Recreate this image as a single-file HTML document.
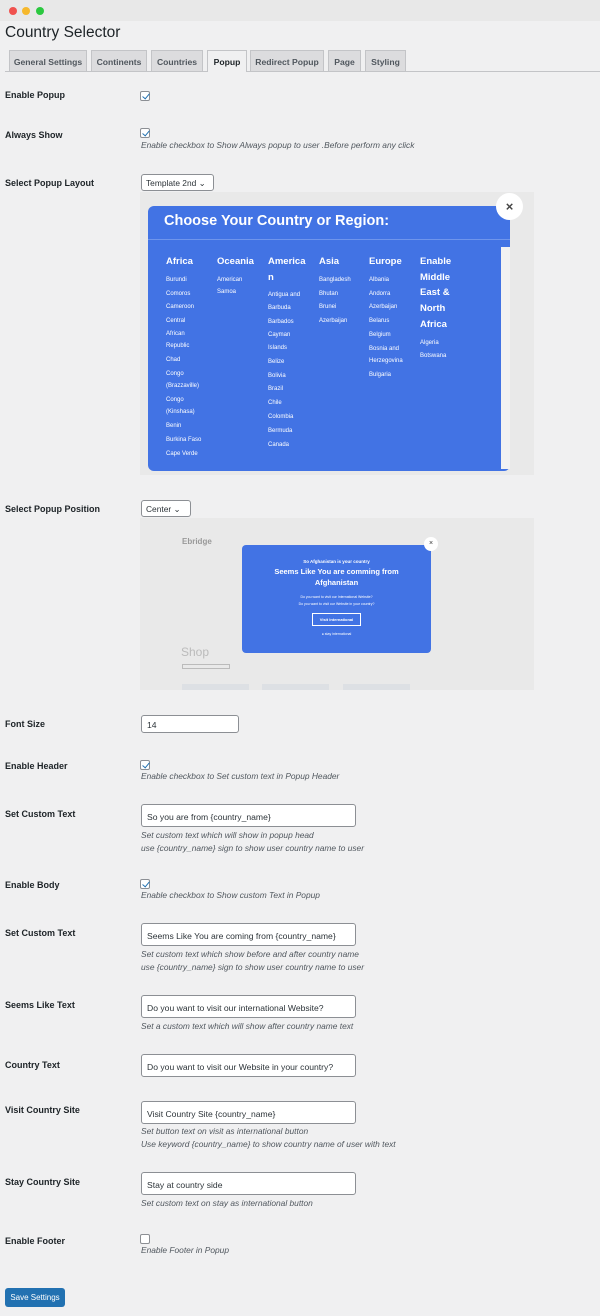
<!DOCTYPE html>
<html><head><meta charset="utf-8"><style>
*{margin:0;padding:0;box-sizing:border-box}
body{width:600px;height:1316px;background:#f0f0f1;font-family:"Liberation Sans",sans-serif;color:#1d2327;position:relative;overflow:hidden}
.a{position:absolute}
.lbl{position:absolute;left:5px;font-size:9px;font-weight:bold;color:#1d2327}
.cb{position:absolute;left:140px;width:10px;height:10px;border:1px solid #8c8f94;border-radius:2px;background:#fff}
.cb.on:after{content:"";position:absolute;left:3px;top:0px;width:3px;height:6px;border:solid #2271b1;border-width:0 1.5px 1.5px 0;transform:rotate(40deg)}
.desc{position:absolute;left:141px;font-size:8.4px;font-style:italic;color:#50575e;line-height:13px}
.inp{position:absolute;left:141px;width:215px;height:23px;background:#fff;border:1px solid #8c8f94;border-radius:3px;font-size:8.6px;padding:7px 0 0 5px;color:#2c3338}
.sel{position:absolute;left:141px;height:17px;background:#fff;border:1px solid #8c8f94;border-radius:3px;font-size:8.4px;padding:3px 0 0 4px;color:#2c3338}
.tab{position:absolute;top:50px;height:21px;background:#dcdcde;border:1px solid #c3c4c7;border-bottom:none;font-size:8.6px;font-weight:bold;color:#50575e;text-align:center;padding-top:6px}
.col{position:absolute;top:254px;color:#fff;width:48px}
.col h4{font-size:9.5px;line-height:15.7px;font-weight:bold;margin-bottom:4px}
.col p{font-size:6px;line-height:12.3px;margin-bottom:1.6px}
</style></head><body>
<div class="a" style="left:0;top:0;width:600px;height:21px;background:#e8e8e8"></div>
<div class="a" style="left:9px;top:7px;width:8px;height:8px;border-radius:50%;background:#f0524f"></div>
<div class="a" style="left:22px;top:7px;width:8px;height:8px;border-radius:50%;background:#f6b82c"></div>
<div class="a" style="left:36px;top:7px;width:8px;height:8px;border-radius:50%;background:#2bc840"></div>
<div class="a" style="left:5px;top:24px;font-size:15.5px;color:#1d2327">Country Selector</div>
<div class="a" style="left:5px;top:71px;width:595px;height:1px;background:#c3c4c7"></div>
<div class="tab" style="left:9px;width:78px">General Settings</div>
<div class="tab" style="left:91px;width:56px">Continents</div>
<div class="tab" style="left:151px;width:52px">Countries</div>
<div class="tab" style="left:207px;width:40px;height:22px;background:#f0f0f1;color:#1d2327">Popup</div>
<div class="tab" style="left:250px;width:74px">Redirect Popup</div>
<div class="tab" style="left:328px;width:33px">Page</div>
<div class="tab" style="left:365px;width:41px">Styling</div>

<div class="lbl" style="top:90px">Enable Popup</div><div class="cb on" style="top:91px"></div>
<div class="lbl" style="top:130px">Always Show</div><div class="cb on" style="top:128px"></div>
<div class="desc" style="top:139px">Enable checkbox to Show Always popup to user .Before perform any click</div>
<div class="lbl" style="top:178px">Select Popup Layout</div>
<div class="sel" style="top:174px;width:73px">Template 2nd &#8964;</div>

<div class="a" style="left:140px;top:192px;width:394px;height:283px;background:#e9e9e9"></div>
<div class="a" style="left:148px;top:206px;width:362px;height:265px;background:#4273e4;border-radius:6px"></div>
<div class="a" style="left:164px;top:213px;font-size:14.5px;font-weight:bold;color:#fff">Choose Your Country or Region:</div>
<div class="a" style="left:148px;top:239px;width:362px;height:1px;background:#6f95ec"></div>
<div class="a" style="left:501px;top:247px;width:9px;height:222px;background:#f2f2f2"></div>
<div class="a" style="left:496px;top:193px;width:27px;height:27px;border-radius:50%;background:#fff;font-size:13px;font-weight:bold;color:#444;text-align:center;line-height:27px">×</div>
<div class="col" style="left:166px"><h4>Africa</h4><p>Burundi</p><p>Comoros</p><p>Cameroon</p><p>Central<br>African<br>Republic</p><p>Chad</p><p>Congo<br>(Brazzaville)</p><p>Congo<br>(Kinshasa)</p><p>Benin</p><p>Burkina Faso</p><p>Cape Verde</p></div>
<div class="col" style="left:217px"><h4>Oceania</h4><p>American<br>Samoa</p></div>
<div class="col" style="left:268px"><h4>America<br>n</h4><p>Antigua and<br>Barbuda</p><p>Barbados</p><p>Cayman<br>Islands</p><p>Belize</p><p>Bolivia</p><p>Brazil</p><p>Chile</p><p>Colombia</p><p>Bermuda</p><p>Canada</p></div>
<div class="col" style="left:319px"><h4>Asia</h4><p>Bangladesh</p><p>Bhutan</p><p>Brunei</p><p>Azerbaijan</p></div>
<div class="col" style="left:369px;width:50px"><h4>Europe</h4><p>Albania</p><p>Andorra</p><p>Azerbaijan</p><p>Belarus</p><p>Belgium</p><p>Bosnia and<br>Herzegovina</p><p>Bulgaria</p></div>
<div class="col" style="left:420px"><h4>Enable<br>Middle<br>East &amp;<br>North<br>Africa</h4><p>Algeria</p><p>Botswana</p></div>

<div class="lbl" style="top:504px">Select Popup Position</div>
<div class="sel" style="top:500px;width:50px">Center &#8964;</div>
<div class="a" style="left:140px;top:518px;width:394px;height:172px;background:#e9e9e9"></div>
<div class="a" style="left:182px;top:537px;font-size:8px;font-weight:bold;color:#999">Ebridge</div>
<div class="a" style="left:181px;top:645px;font-size:12px;color:#bbb">Shop</div>
<div class="a" style="left:182px;top:664px;width:48px;height:5px;border:1px solid #bbb"></div>
<div class="a" style="left:182px;top:684px;width:67px;height:6px;background:#dde0e4"></div>
<div class="a" style="left:262px;top:684px;width:67px;height:6px;background:#dde0e4"></div>
<div class="a" style="left:343px;top:684px;width:67px;height:6px;background:#dde0e4"></div>
<div class="a" style="left:242px;top:545px;width:189px;height:108px;background:#4273e4;border-radius:4px;color:#fff;text-align:center">
<div style="font-size:4.5px;font-weight:bold;margin-top:14px">So Afghanistan is your country</div>
<div style="font-size:7.5px;font-weight:bold;line-height:11px;margin-top:2px">Seems Like You are comming from<br>Afghanistan</div>
<div style="font-size:3.5px;margin-top:6px;line-height:7px">Do you want to visit our International Website?<br>Do you want to visit our Website in your country?</div>
<div style="width:49px;height:13px;border:1px solid #fff;margin:5px auto 0;font-size:4px;line-height:11px;font-weight:bold">Visit International</div>
<div style="font-size:3.5px;margin-top:6px">● stay international</div>
</div>
<div class="a" style="left:424px;top:537px;width:14px;height:14px;border-radius:50%;background:#fff;font-size:7px;text-align:center;line-height:14px;color:#333">×</div>

<div class="lbl" style="top:719px">Font Size</div>
<div class="inp" style="top:715px;width:98px;height:18px;padding-top:4px">14</div>
<div class="lbl" style="top:761px">Enable Header</div><div class="cb on" style="top:760px"></div>
<div class="desc" style="top:770px">Enable checkbox to Set custom text in Popup Header</div>
<div class="lbl" style="top:809px">Set Custom Text</div>
<div class="inp" style="top:804px">So you are from {country_name}</div>
<div class="desc" style="top:829px">Set custom text which will show in popup head<br>use {country_name} sign to show user country name to user</div>
<div class="lbl" style="top:880px">Enable Body</div><div class="cb on" style="top:879px"></div>
<div class="desc" style="top:889px">Enable checkbox to Show custom Text in Popup</div>
<div class="lbl" style="top:928px">Set Custom Text</div>
<div class="inp" style="top:923px">Seems Like You are coming from {country_name}</div>
<div class="desc" style="top:948px">Set custom text which show before and after country name<br>use {country_name} sign to show user country name to user</div>
<div class="lbl" style="top:1000px">Seems Like Text</div>
<div class="inp" style="top:995px">Do you want to visit our international Website?</div>
<div class="desc" style="top:1020px">Set a custom text which will show after country name text</div>
<div class="lbl" style="top:1060px">Country Text</div>
<div class="inp" style="top:1054px">Do you want to visit our Website in your country?</div>
<div class="lbl" style="top:1105px">Visit Country Site</div>
<div class="inp" style="top:1101px">Visit Country Site {country_name}</div>
<div class="desc" style="top:1125px">Set button text on visit as international button<br>Use keyword {country_name} to show country name of user with text</div>
<div class="lbl" style="top:1177px">Stay Country Site</div>
<div class="inp" style="top:1172px">Stay at country side</div>
<div class="desc" style="top:1197px">Set custom text on stay as international button</div>
<div class="lbl" style="top:1236px">Enable Footer</div><div class="cb" style="top:1234px"></div>
<div class="desc" style="top:1244px">Enable Footer in Popup</div>
<div class="a" style="left:5px;top:1288px;width:60px;height:19px;background:#2271b1;border-radius:3px;color:#fff;font-size:8px;text-align:center;line-height:19px">Save Settings</div>
</body></html>
